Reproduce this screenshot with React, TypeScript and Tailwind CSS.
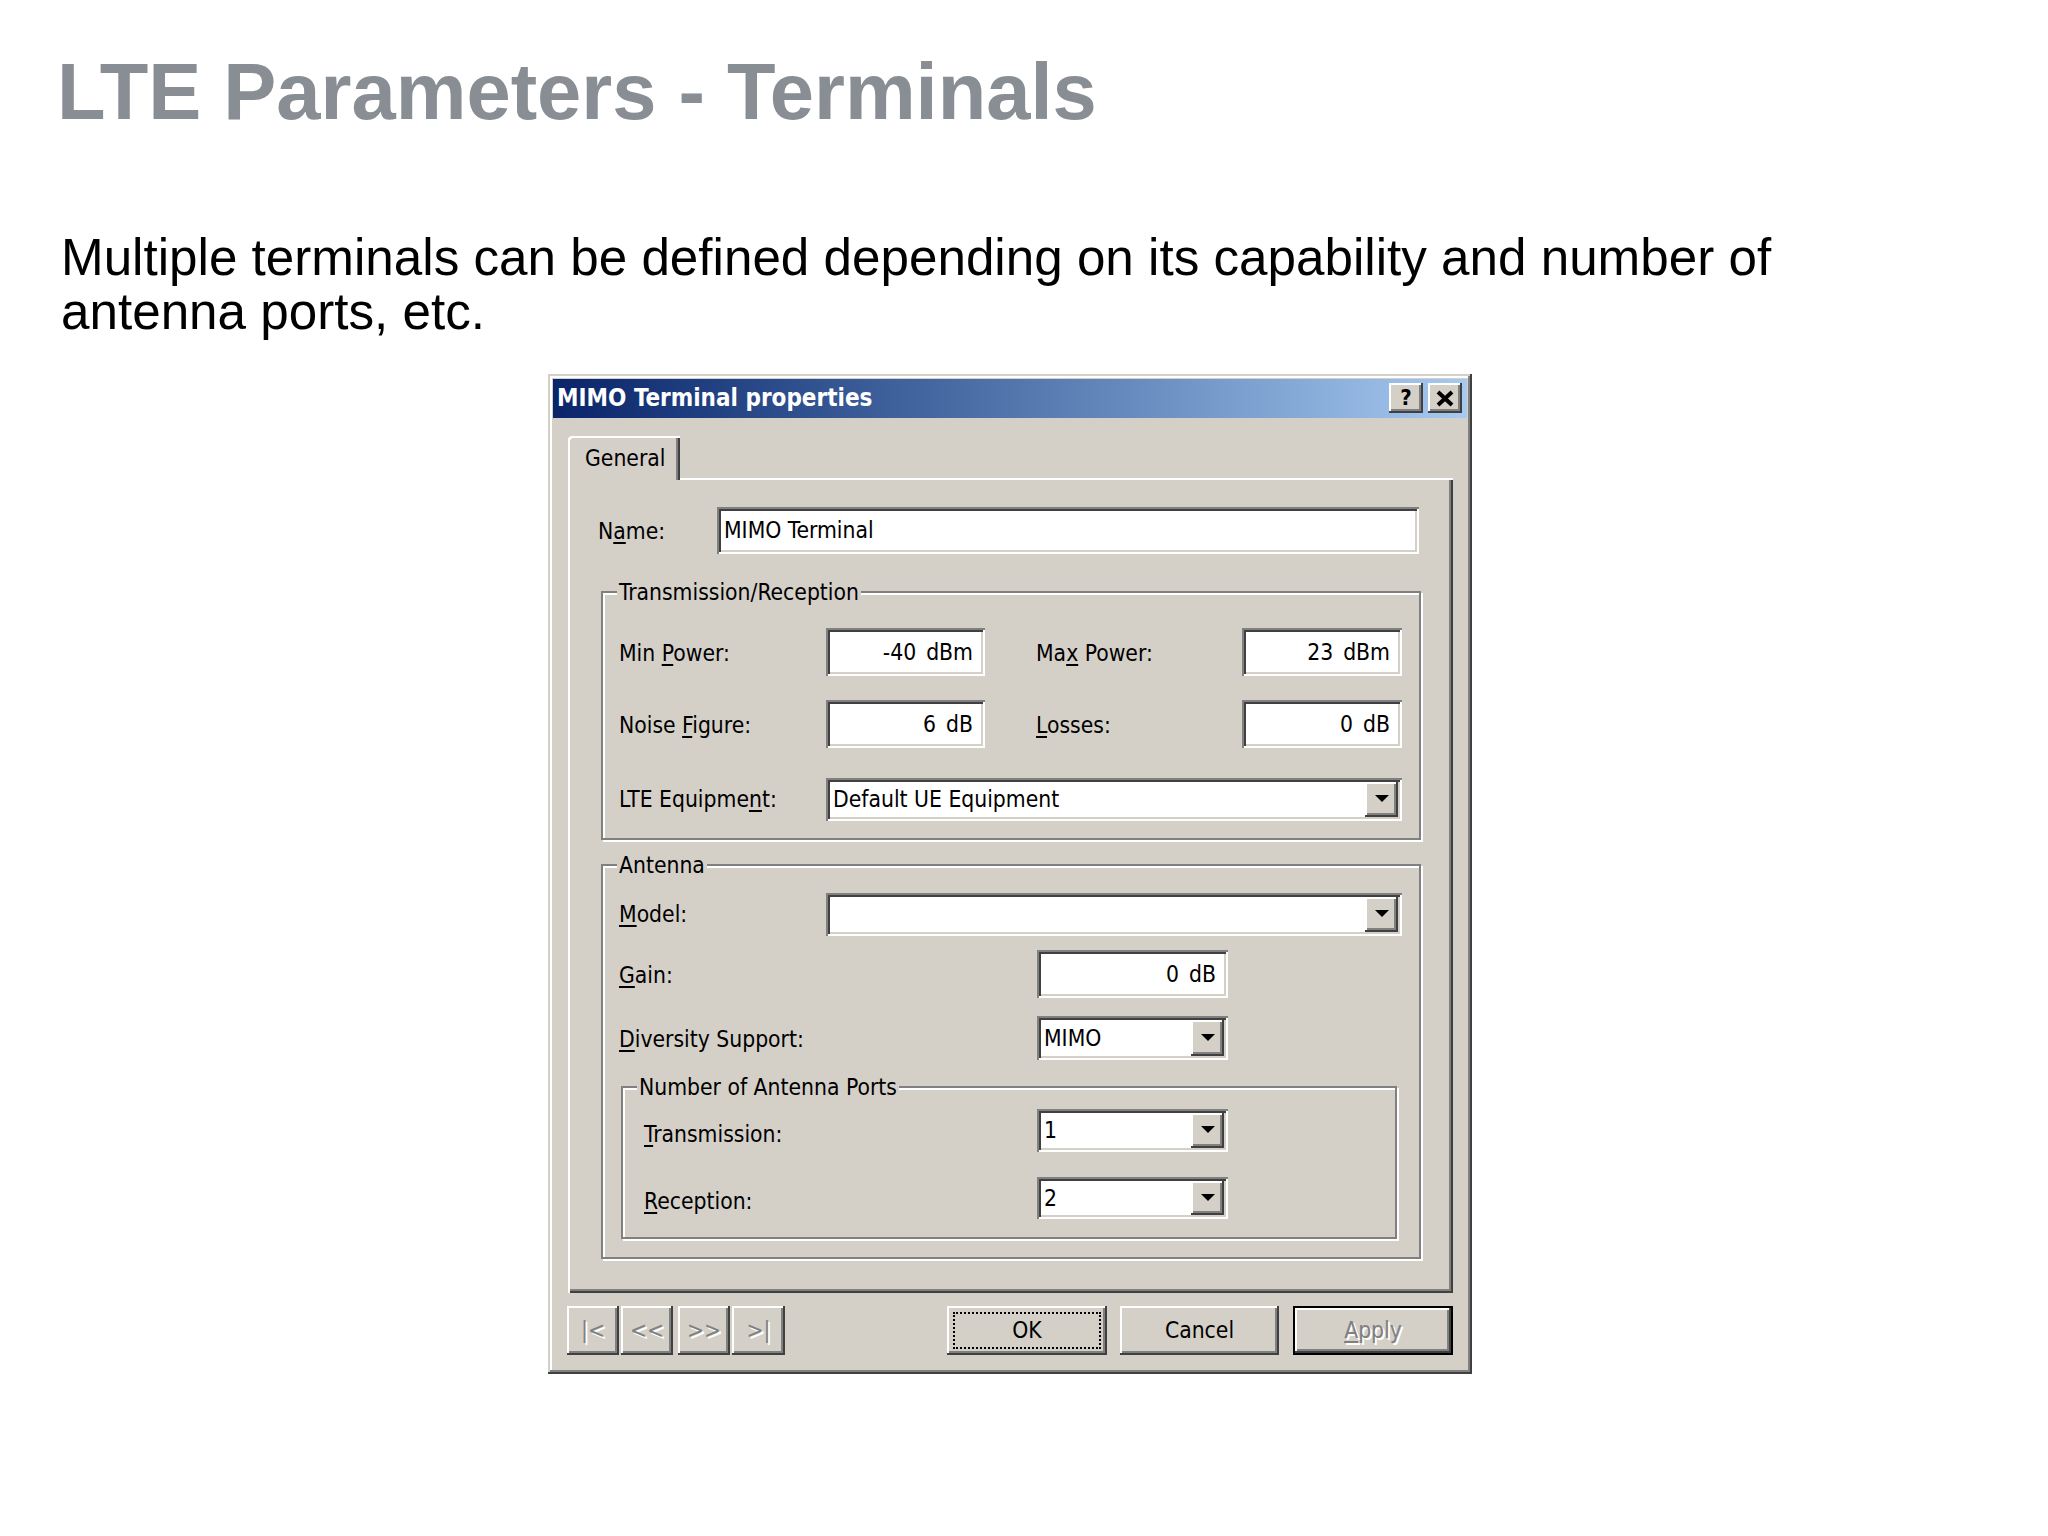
import type { ReactNode } from "react";

// classic 3D bevels
const raised =
  "bg-[#d4d0c8] shadow-[inset_-2px_-2px_0_#404040,inset_2px_2px_0_#fff,inset_-4px_-4px_0_#808080]";
const sunken =
  "bg-white shadow-[inset_2px_2px_0_#808080,inset_-2px_-2px_0_#fff,inset_4px_4px_0_#404040,inset_-4px_-4px_0_#d4d0c8]";
const etched = "border-2 border-[#808080] shadow-[2px_2px_0_#fff,inset_2px_2px_0_#fff]";

function U({ children }: { children: ReactNode }) {
  return <u className="decoration-2 underline-offset-[3px]">{children}</u>;
}

function Input({
  className,
  right,
  children,
}: {
  className: string;
  right?: boolean;
  children?: ReactNode;
}) {
  return (
    <div
      className={`${sunken} flex items-center ${right ? "justify-end pr-[12px]" : "pl-[7px]"} ${className}`}
    >
      {children}
    </div>
  );
}

function Val({ v, unit }: { v: string; unit: string }) {
  return (
    <>
      <span>{v}</span>
      <span className="ml-[10px]">{unit}</span>
    </>
  );
}

function Select({ className, value }: { className: string; value?: string }) {
  return (
    <div className={`${sunken} flex items-stretch p-[4px] ${className}`}>
      <span className="flex-1 flex items-center pl-[3px]">{value}</span>
      <span className={`${raised} w-[33px] flex items-center justify-center`}>
        <svg width="14" height="8" viewBox="0 0 14 8">
          <path d="M0 0h14L7 7z" fill="#000" />
        </svg>
      </span>
    </div>
  );
}

function Group({
  title,
  className,
  children,
}: {
  title: string;
  className: string;
  children: ReactNode;
}) {
  return (
    <div className={`${etched} ${className}`}>
      <div className="-mt-[14px] ml-[14px] w-fit px-[2px] h-[26px] leading-[26px] bg-[#d4d0c8]">
        {title}
      </div>
      <div className="pl-[16px]">{children}</div>
    </div>
  );
}

function NavBtn({ className, children }: { className: string; children: ReactNode }) {
  return (
    <div
      className={`${raised} h-[49px] flex items-center justify-center text-[#808080] [text-shadow:2px_2px_0_#fff] ${className}`}
    >
      {children}
    </div>
  );
}

function Dialog() {
  return (
    <div className="w-[924px] h-[1000px] p-[5px] flex flex-col bg-[#d4d0c8] shadow-[inset_-2px_-2px_0_#404040,inset_2px_2px_0_#d4d0c8,inset_-4px_-4px_0_#808080,inset_4px_4px_0_#fff] font-['DejaVu_Sans_Condensed','DejaVu_Sans',sans-serif] font-stretch-condensed text-[22.7px] leading-[26px] text-black">
      {/* Caption */}
      <div className="h-[39px] flex items-center bg-linear-to-r from-[#0a246a] to-[#a6caf0] pl-[4px] pr-[5px]">
        <span className="flex-1 text-white font-bold text-[24px]">MIMO Terminal properties</span>
        <div className="flex gap-[5px]">
          <div className={`${raised} w-[34px] h-[30px] flex items-center justify-center font-bold text-[22px] leading-none`}>
            ?
          </div>
          <div className={`${raised} w-[34px] h-[30px] flex items-center justify-center`}>
            <svg width="20" height="17" viewBox="0 0 20 17">
              <path d="M3 2l14 13M17 2L3 15" stroke="#000" strokeWidth="4" />
            </svg>
          </div>
        </div>
      </div>

      {/* Tab + panel */}
      <div className="mt-[18px] ml-[15px] flex flex-col">
        <div className="relative z-10 w-[112px] h-[44px] -mb-[2px] pl-[17px] flex items-center bg-[#d4d0c8] rounded-tl-[4px] shadow-[inset_2px_2px_0_#fff,inset_-2px_0_0_#404040,inset_-4px_0_0_#808080]">
          General
        </div>
        <div className="w-[885px] h-[815px] pt-[29px] shadow-[inset_2px_2px_0_#fff,inset_-2px_-2px_0_#404040,inset_-4px_-4px_0_#808080]">
          <div className="flex items-center h-[47px] pl-[30px]">
            <span className="w-[119px] pt-[2px]">
              N<U>a</U>me:
            </span>
            <Input className="w-[702px] h-[47px]">MIMO Terminal</Input>
          </div>

          <Group title="Transmission/Reception" className="mt-[37px] ml-[33px] w-[820px] h-[249px]">
            <div className="mt-[23px] flex items-center h-[48px]">
              <span className="w-[207px] pt-[2px]">
                Min <U>P</U>ower:
              </span>
              <Input right className="w-[159px] h-[48px]">
                <Val v="-40" unit="dBm" />
              </Input>
              <span className="ml-[51px] w-[206px] pt-[2px]">
                Ma<U>x</U> Power:
              </span>
              <Input right className="w-[160px] h-[48px]">
                <Val v="23" unit="dBm" />
              </Input>
            </div>
            <div className="mt-[24px] flex items-center h-[48px]">
              <span className="w-[207px] pt-[2px]">
                Noise <U>F</U>igure:
              </span>
              <Input right className="w-[159px] h-[48px]">
                <Val v="6" unit="dB" />
              </Input>
              <span className="ml-[51px] w-[206px] pt-[2px]">
                <U>L</U>osses:
              </span>
              <Input right className="w-[160px] h-[48px]">
                <Val v="0" unit="dB" />
              </Input>
            </div>
            <div className="mt-[30px] flex items-center h-[43px]">
              <span className="w-[207px]">
                LTE Equipme<U>n</U>t:
              </span>
              <Select className="w-[576px] h-[43px]" value="Default UE Equipment" />
            </div>
          </Group>

          <Group title="Antenna" className="mt-[24px] ml-[33px] w-[820px] h-[395px]">
            <div className="mt-[15px] flex items-center h-[43px]">
              <span className="w-[207px]">
                <U>M</U>odel:
              </span>
              <Select className="w-[576px] h-[43px]" />
            </div>
            <div className="mt-[14px] flex items-center h-[48px]">
              <span className="w-[418px] pt-[3px]">
                <U>G</U>ain:
              </span>
              <Input right className="w-[191px] h-[48px]">
                <Val v="0" unit="dB" />
              </Input>
            </div>
            <div className="mt-[18px] flex items-center h-[44px]">
              <span className="w-[418px] pt-[2px]">
                <U>D</U>iversity Support:
              </span>
              <Select className="w-[191px] h-[44px]" value="MIMO" />
            </div>

            <Group title="Number of Antenna Ports" className="mt-[26px] ml-[2px] w-[776px] h-[153px]">
              <div className="mt-[9px] pl-[5px] flex items-center h-[43px]">
                <span className="w-[393px] pt-[8px]">
                  <U>T</U>ransmission:
                </span>
                <Select className="w-[191px] h-[43px]" value="1" />
              </div>
              <div className="mt-[25px] pl-[5px] flex items-center h-[42px]">
                <span className="w-[393px] pt-[6px]">
                  <U>R</U>eception:
                </span>
                <Select className="w-[191px] h-[42px]" value="2" />
              </div>
            </Group>
          </Group>
        </div>
      </div>

      {/* Footer buttons */}
      <div className="mt-[13px] flex h-[49px]">
        <div className="ml-[14px] flex">
          <NavBtn className="w-[52px]">|&lt;</NavBtn>
          <NavBtn className="ml-[2px] w-[52px]">&lt;&lt;</NavBtn>
          <NavBtn className="ml-[5px] w-[52px]">&gt;&gt;</NavBtn>
          <NavBtn className="ml-[2px] w-[53px]">&gt;|</NavBtn>
        </div>
        <div className="ml-auto mr-[14px] flex">
          <div className={`${raised} w-[160px] h-[49px] p-[6px] flex`}>
            <div className="flex-1 border-2 border-dotted border-black flex items-center justify-center">
              OK
            </div>
          </div>
          <div className={`${raised} ml-[13px] w-[159px] h-[49px] flex items-center justify-center`}>
            Cancel
          </div>
          <div className="ml-[14px] w-[160px] h-[49px] border-2 border-black flex">
            <div className={`${raised} flex-1 flex items-center justify-center text-[#808080] [text-shadow:2px_2px_0_#fff]`}>
              <U>A</U>pply
            </div>
          </div>
        </div>
      </div>
    </div>
  );
}

export default function App() {
  return (
    <div className="w-[2048px] h-[1536px] bg-white overflow-hidden font-['Liberation_Sans',Arial,sans-serif]">
      <h1 className="pt-[52px] pl-[57px] text-[79.5px] leading-none font-bold text-[#888e94]">
        LTE Parameters - Terminals
      </h1>
      <p className="mt-[99px] pl-[61px] w-[1850px] text-[51.2px] leading-[54px] text-black">
        Multiple terminals can be defined depending on its capability and number of antenna ports, etc.
      </p>
      <div className="mt-[35px] ml-[548px]">
        <Dialog />
      </div>
    </div>
  );
}
